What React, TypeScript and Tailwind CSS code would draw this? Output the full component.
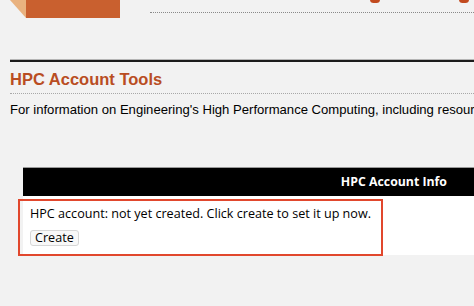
export default function App() {
  return (
    <div className="relative w-[474px] h-[306px] overflow-hidden bg-[#f2f2f2] font-['Liberation_Sans',Arial,sans-serif] text-black">
      {/* top banner remnants */}
      <div className="flex h-[59px] items-start">
        <div className="ml-[10px] flex">
          <svg width="16" height="18" viewBox="0 0 16 18">
            <polygon points="0,0 16,0 16,18" fill="#e9b27f" />
          </svg>
          <div className="w-[94px] h-[18px] bg-[#c9602f]" />
        </div>
        <div className="ml-[30px] mt-[12px] flex-1 border-t border-dotted border-[#8a8a8a]" />
      </div>
      <div className="absolute left-[370px] top-[-4px] w-[10px] h-[7px] rounded-full bg-[#c24a1f]" />
      <div className="absolute left-[459px] top-[-4px] w-[10px] h-[7px] rounded-full bg-[#c24a1f]" />

      {/* section heading */}
      <div className="ml-[10px]">
        <div className="border-t border-[#b5b5b5] h-[3px] bg-[#1c1c1c]" />
        <h2 className="mt-[7px] text-[16.5px] leading-[20px] font-bold text-[#b94d22]">HPC Account Tools</h2>
        <div className="mt-[4px] border-t border-dotted border-[#a8a8a8]" />
        <p className="mt-[8px] text-[13.1px] leading-[16px] whitespace-nowrap">
          For information on Engineering's High Performance Computing, including resour
        </p>
      </div>

      {/* account info table */}
      <div className="ml-[23px] mt-[49px] font-['Open_Sans','DejaVu_Sans',sans-serif]">
        <div className="h-[29px] bg-black border-t border-[#9a9a9a] flex items-center justify-end pr-[27px]">
          <span className="text-white font-bold text-[12.3px]">HPC Account Info</span>
        </div>
        <div className="h-[59px] bg-white pl-[7px] pt-[10px] flex flex-col items-start">
          <span className="text-[12.6px] leading-[16px]">HPC account: not yet created. Click create to set it up now.</span>
          <button className="mt-[8px] h-[16px] px-[4px] rounded-[3px] border border-[#d6d6d6] bg-[#f8f8f8] text-[12.6px] leading-[14px]">
            Create
          </button>
        </div>
      </div>

      {/* highlight annotation */}
      <div className="absolute left-[18px] top-[199px] w-[365px] h-[57px] border-2 border-[#e1472d]" />
    </div>
  )
}
